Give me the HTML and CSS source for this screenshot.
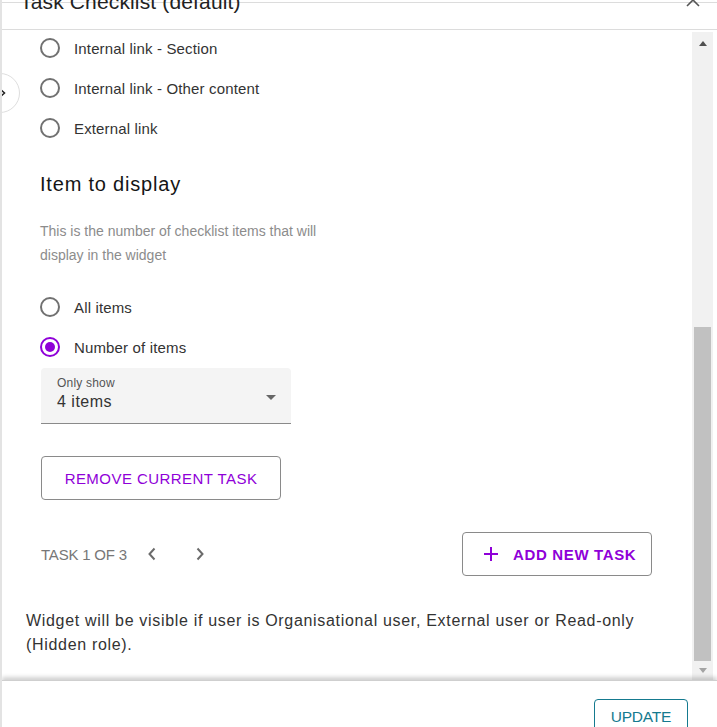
FILE: index.html
```html
<!DOCTYPE html>
<html lang="en">
<head>
<meta charset="utf-8">
<title>Task Checklist (default)</title>
<link rel="stylesheet" href="styles.css">
</head>
<body>
<div class="panel">
  <header class="header">
    <h1 class="title">Task Checklist (default)</h1>
    <svg class="close" width="14" height="14" viewBox="0 0 14 14" aria-label="Close"><path d="M1 1L13 13M13 1L1 13" stroke="#555" stroke-width="1.6" fill="none"/></svg>
  </header>

  <div class="main">
    <div class="content">
      <div class="radio-group first">
        <label class="radio"><span class="dot"></span><span class="label">Internal link - Section</span></label>
        <label class="radio"><span class="dot"></span><span class="label">Internal link - Other content</span></label>
        <label class="radio"><span class="dot"></span><span class="label">External link</span></label>
      </div>

      <h2 class="section-title">Item to display</h2>
      <p class="hint">This is the number of checklist items that will display in the widget</p>

      <div class="radio-group second">
        <label class="radio"><span class="dot"></span><span class="label">All items</span></label>
        <label class="radio checked"><span class="dot"></span><span class="label">Number of items</span></label>
      </div>

      <div class="select">
        <div class="select-text">
          <span class="select-label">Only show</span>
          <span class="select-value">4 items</span>
        </div>
        <span class="caret"></span>
      </div>

      <button class="btn remove">REMOVE CURRENT TASK</button>

      <div class="task-row">
        <div class="task-nav">
          <span class="task-count">TASK 1 OF 3</span>
          <span class="nav-btn prev"><svg width="10" height="14" viewBox="0 0 10 14"><path d="M7.5 1.5L2.5 7l5 5.5" stroke="#6b6b6b" stroke-width="2" fill="none"/></svg></span>
          <span class="nav-btn next"><svg width="10" height="14" viewBox="0 0 10 14"><path d="M2.5 1.5L7.5 7l-5 5.5" stroke="#6b6b6b" stroke-width="2" fill="none"/></svg></span>
        </div>
        <button class="btn add"><svg width="14" height="14" viewBox="0 0 14 14"><path d="M7 0V14M0 7H14" stroke="#8f00d8" stroke-width="2" fill="none"/></svg><span>ADD NEW TASK</span></button>
      </div>

      <p class="visibility">Widget will be visible if user is Organisational user, External user or Read-only (Hidden role).</p>
    </div>

    <div class="scrollbar">
      <div class="sb-btn up"><span class="tri-up"></span></div>
      <div class="sb-track"><div class="sb-thumb"></div></div>
      <div class="sb-btn down"><span class="tri-down"></span></div>
    </div>

    <div class="toggle"><svg width="7" height="10" viewBox="0 0 7 10"><path d="M1 1l4.5 4L1 9" stroke="#222" stroke-width="1.5" fill="none"/></svg></div>
  </div>

  <footer class="footer">
    <button class="btn update">UPDATE</button>
  </footer>
</div>
</body>
</html>
```

FILE: styles.css
```css
* { box-sizing: border-box; }

html, body {
  margin: 0;
  padding: 0;
  background: #fff;
  overflow: hidden;
}

body {
  font-family: "Liberation Sans", Arial, sans-serif;
  color: #333;
}

.panel {
  width: 717px;
  height: 727px;
  display: flex;
  flex-direction: column;
  border-left: 2px solid #e3e3e3;
  overflow: hidden;
}

.header {
  flex: 0 0 30px;
  display: flex;
  align-items: flex-start;
  border-bottom: 1px solid #dcdcdc;
  box-shadow: inset 0 2px 0 #fff, inset 0 3px 0 #dcdcdc;
}

.title {
  margin: -10px 0 0 18px;
  font-size: 21px;
  line-height: 24px;
  font-weight: 400;
  letter-spacing: 0.15px;
  color: #222;
}

.close {
  margin: -7px 17px 0 auto;
}

.main {
  position: relative;
  flex: 0 0 650px;
  display: flex;
  overflow: hidden;
}

.content {
  flex: 1;
  padding: 0 40px 0 38px;
  display: flex;
  flex-direction: column;
  align-items: flex-start;
}

.radio-group {
  display: flex;
  flex-direction: column;
}
.radio-group.first { margin-top: -2px; }
.radio-group.second { margin-top: 20px; }

.radio {
  height: 40px;
  display: flex;
  align-items: center;
  font-size: 15px;
  letter-spacing: 0.15px;
  color: #333;
}

.dot {
  width: 20px;
  height: 20px;
  border: 2px solid #717171;
  border-radius: 50%;
  display: flex;
  align-items: center;
  justify-content: center;
  margin-right: 14px;
}

.radio.checked .dot { border-color: #8f00d8; }
.radio.checked .dot::after {
  content: "";
  width: 10px;
  height: 10px;
  border-radius: 50%;
  background: #8f00d8;
}

.section-title {
  margin: 22px 0 0 0;
  font-size: 20px;
  line-height: 28px;
  font-weight: 400;
  letter-spacing: 0.8px;
  color: #151515;
}

.hint {
  margin: 21px 0 0 0;
  width: 300px;
  font-size: 14px;
  line-height: 24px;
  color: #8c8c8c;
}

.select {
  margin: 1px 0 0 1px;
  width: 250px;
  height: 56px;
  background: #f4f4f4;
  border-bottom: 1px solid #8a8a8a;
  border-radius: 4px 4px 0 0;
  display: flex;
  align-items: flex-start;
  padding: 7px 15px 0 16px;
}

.select-text {
  flex: 1;
  display: flex;
  flex-direction: column;
}

.select-label {
  font-size: 12px;
  line-height: 16px;
  letter-spacing: 0.2px;
  color: #555;
}

.select-value {
  margin-top: 1px;
  font-size: 16px;
  line-height: 20px;
  letter-spacing: 0.5px;
  color: #333;
}

.caret {
  margin-top: 20px;
  width: 0;
  height: 0;
  border-left: 5px solid transparent;
  border-right: 5px solid transparent;
  border-top: 5px solid #666;
}

.btn {
  font-family: inherit;
  background: #fff;
  border: 1px solid #8a8a8a;
  border-radius: 4px;
  cursor: pointer;
}

.remove {
  margin: 32px 0 0 1px;
  width: 240px;
  height: 44px;
  font-size: 15px;
  letter-spacing: 0.45px;
  color: #8f00d8;
}

.task-row {
  margin-top: 32px;
  align-self: stretch;
  display: flex;
  align-items: center;
  justify-content: space-between;
  padding-left: 1px;
}

.task-nav {
  display: flex;
  align-items: center;
}

.task-count {
  font-size: 15px;
  letter-spacing: -0.2px;
  color: #777;
}

.nav-btn {
  width: 24px;
  height: 24px;
  display: flex;
  align-items: center;
  justify-content: center;
}
.nav-btn.prev { margin-left: 13px; }
.nav-btn.next { margin-left: 24px; }

.add {
  width: 190px;
  height: 44px;
  display: flex;
  align-items: center;
  padding-left: 21px;
  gap: 15px;
  font-size: 15px;
  font-weight: 700;
  letter-spacing: 0.65px;
  color: #8f00d8;
}

.visibility {
  margin: 33px 0 0 -14px;
  width: 626px;
  font-size: 16px;
  line-height: 24px;
  letter-spacing: 0.68px;
  color: #333;
}

.scrollbar {
  flex: 0 0 21px;
  margin: 2px 4px 0 0;
  background: #f1f1f1;
  display: flex;
  flex-direction: column;
  align-items: center;
}

.sb-btn {
  display: flex;
  justify-content: center;
}
.sb-btn.up { height: 23px; padding-top: 9px; }
.sb-btn.down { height: 19px; padding-top: 7px; }

.tri-up {
  width: 0;
  height: 0;
  border-left: 4.5px solid transparent;
  border-right: 4.5px solid transparent;
  border-bottom: 5px solid #505050;
}
.tri-down {
  width: 0;
  height: 0;
  border-left: 4.5px solid transparent;
  border-right: 4.5px solid transparent;
  border-top: 5px solid #a3a3a3;
}

.sb-track {
  flex: 1;
  width: 17px;
}

.sb-thumb {
  margin-top: 272px;
  height: 334px;
  background: #c1c1c1;
}

.toggle {
  position: absolute;
  left: -22px;
  top: 43px;
  width: 40px;
  height: 40px;
  border: 1px solid #dedede;
  border-radius: 50%;
  background: #fff;
  display: flex;
  align-items: center;
  justify-content: flex-end;
  padding-right: 13px;
}

.footer {
  flex: 1;
  position: relative;
  border-top: 1px solid #cfcfcf;
  box-shadow: 0 -3px 4px rgba(0, 0, 0, 0.18);
  display: flex;
  justify-content: flex-end;
  align-items: flex-start;
  padding: 18px 29px 0 0;
  background: #fff;
}

.update {
  width: 94px;
  height: 36px;
  border-color: #157a8f;
  font-size: 15.5px;
  letter-spacing: -0.2px;
  color: #157a8f;
  padding: 0;
}
```
